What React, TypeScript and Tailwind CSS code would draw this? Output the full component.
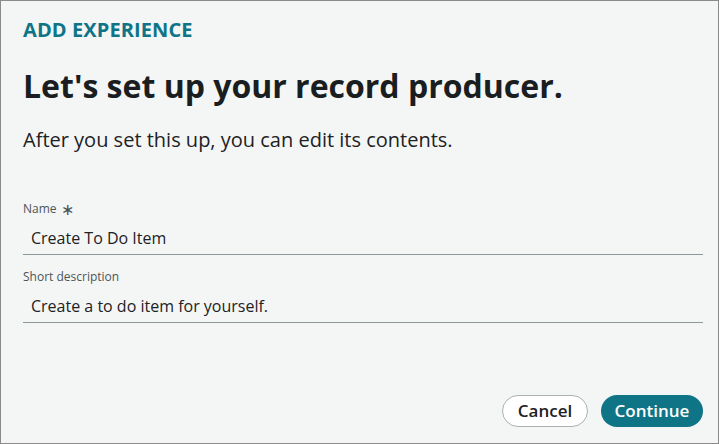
import React from 'react';

const font = { fontFamily: '"Open Sans", "Noto Sans", sans-serif' };

function Field({ label, value, required }: { label: string; value: string; required?: boolean }) {
    return (
        <div className="flex flex-col">
            <div className="flex items-center gap-1 text-[12px] leading-[18px] text-[#4b5557]">
                <span>{label}</span>
                {required && <span className="text-[16px] font-light leading-[18px] text-[#4b5557]">∗</span>}
            </div>
            <div className="mt-[7px] h-[30px] border-b border-[#8d9a9c] px-2 text-[16px] leading-[26px] text-[#1d2224]">
                {value}
            </div>
        </div>
    );
}

export default function App() {
    return (
        <div
            className="flex h-[444px] w-[719px] flex-col border border-[#8a8a8a] bg-[#f4f6f6] pl-[22px] pr-[15px]"
            style={font}
        >
            {/* Header */}
            <div className="mt-[15px] text-[20px] font-bold leading-[27px] tracking-[0.1px] text-[#0f7586]">
                ADD EXPERIENCE
            </div>
            <h1 className="mt-[23px] text-[32px] font-bold leading-[40px] text-[#1a1e20]">
                Let's set up your record producer.
            </h1>
            <p className="mt-[20px] text-[20px] leading-[28px] text-[#1d2224]">
                After you set this up, you can edit its contents.
            </p>

            {/* Form */}
            <div className="mt-[46px] flex flex-col gap-[13px]">
                <Field label="Name" value="Create To Do Item" required />
                <Field label="Short description" value="Create a to do item for yourself." />
            </div>

            {/* Actions */}
            <div className="mt-auto mb-[16px] flex justify-end gap-[13px]">
                <button className="h-[32px] w-[86px] rounded-full border border-[#a9b1b3] bg-white text-[17px] font-semibold text-[#1d2224]">
                    Cancel
                </button>
                <button className="h-[32px] w-[102px] rounded-full bg-[#0f7586] text-[17px] font-semibold text-white">
                    Continue
                </button>
            </div>
        </div>
    );
}
